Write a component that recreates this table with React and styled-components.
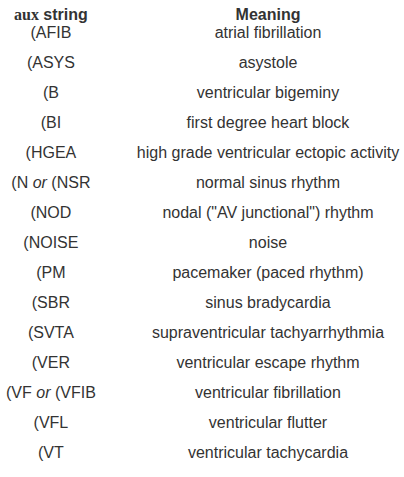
import React from "react";
import styled, { createGlobalStyle } from "styled-components";

const GlobalStyle = createGlobalStyle`
  html, body {
    margin: 0;
    padding: 0;
    background: #fff;
  }
  body {
    font-family: "Liberation Sans", Arial, sans-serif;
    font-size: 16px;
    color: #333;
  }
`;

const Page = styled.div`
  padding: 6px 0 0 6px;
`;

const Table = styled.table`
  border-collapse: collapse;
  border-spacing: 0;
  line-height: 18px;
`;

const HeadCell = styled.th`
  padding: 0;
  padding-right: ${({ $gap }) => ($gap ? "41px" : "0")};
  font-weight: bold;
  text-align: center;
  white-space: nowrap;
`;

const Cell = styled.td`
  padding: 0 0 12px 0;
  padding-right: ${({ $gap }) => ($gap ? "41px" : "0")};
  text-align: center;
  white-space: nowrap;
`;

const Code = styled.span`
  font-family: "Liberation Serif", "Times New Roman", serif;
  font-weight: bold;
`;

const rows = [
  [["(AFIB"], "atrial fibrillation"],
  [["(ASYS"], "asystole"],
  [["(B"], "ventricular bigeminy"],
  [["(BI"], "first degree heart block"],
  [["(HGEA"], "high grade ventricular ectopic activity"],
  [["(N", "(NSR"], "normal sinus rhythm"],
  [["(NOD"], 'nodal ("AV junctional") rhythm'],
  [["(NOISE"], "noise"],
  [["(PM"], "pacemaker (paced rhythm)"],
  [["(SBR"], "sinus bradycardia"],
  [["(SVTA"], "supraventricular tachyarrhythmia"],
  [["(VER"], "ventricular escape rhythm"],
  [["(VF", "(VFIB"], "ventricular fibrillation"],
  [["(VFL"], "ventricular flutter"],
  [["(VT"], "ventricular tachycardia"],
];

export default function App() {
  return (
    <>
      <GlobalStyle />
      <Page>
        <Table>
          <thead>
            <tr>
              <HeadCell $gap>
                <Code>aux</Code> string
              </HeadCell>
              <HeadCell>Meaning</HeadCell>
            </tr>
          </thead>
          <tbody>
            {rows.map(([codes, meaning]) => (
              <tr key={codes[0]}>
                <Cell $gap>
                  {codes.length > 1 ? (
                    <>
                      {codes[0]} <i>or</i> {codes[1]}
                    </>
                  ) : (
                    codes[0]
                  )}
                </Cell>
                <Cell>{meaning}</Cell>
              </tr>
            ))}
          </tbody>
        </Table>
      </Page>
    </>
  );
}
